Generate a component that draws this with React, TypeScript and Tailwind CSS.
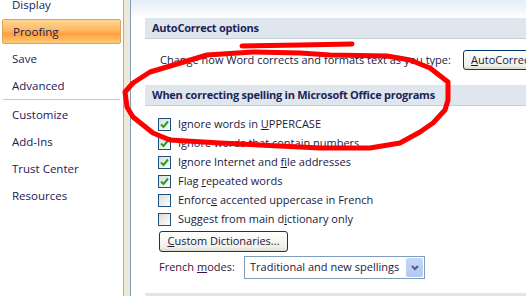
import React from "react";

const font = { fontFamily: '"Open Sans", "Noto Sans", "DejaVu Sans", sans-serif' };

function Check() {
  return (
    <svg width="9" height="9" viewBox="0 0 9 9">
      <path d="M1 4.5 L3.5 7 L8 1.5" fill="none" stroke="#21a121" strokeWidth="2" />
    </svg>
  );
}

function CheckRow({ checked, children }: { checked?: boolean; children: React.ReactNode }) {
  return (
    <div className="flex h-[19px] items-center pl-[13px]">
      <div className="flex h-[13px] w-[13px] shrink-0 items-center justify-center border border-[#1c5180] bg-[linear-gradient(135deg,#dcdcd7_0%,#ffffff_100%)]">
        {checked ? <Check /> : null}
      </div>
      <span className="ml-[7px] whitespace-nowrap text-[11px] text-[#1a1a3c]">{children}</span>
    </div>
  );
}

function Header({ children }: { children: React.ReactNode }) {
  return (
    <div className="flex h-[21px] items-center border-b border-[#c5cdd6] bg-[#dfe6ee] pl-[7px]">
      <span className="whitespace-nowrap text-[11px] font-bold tracking-[-0.25px] text-[#1b2456]">{children}</span>
    </div>
  );
}

const navItems = ["Display", "Proofing", "Save", "Advanced"];
const navItems2 = ["Customize", "Add-Ins", "Trust Center", "Resources"];

export default function App() {
  return (
    <div className="relative flex h-[296px] w-[526px] overflow-hidden bg-white" style={font}>
      <div className="mt-[-9px] w-[123px] shrink-0">
        {navItems.map((item) =>
          item === "Proofing" ? (
            <div key={item} className="h-[27px] px-[2px] py-[1px]">
              <div className="flex h-[25px] items-center rounded-[2px] border border-[#dba558] bg-[linear-gradient(180deg,#ffd796_0%,#ffb860_45%,#ff9f3c_60%,#ffcb78_100%)] pl-[10px] text-[11.5px] text-[#20195a]">
                {item}
              </div>
            </div>
          ) : (
            <div key={item} className="flex h-[27px] items-center pl-[12px] text-[11.5px] text-[#20195a]">
              {item}
            </div>
          ),
        )}
        <div className="mx-[3px] h-[2px] border-t border-[#c4c4c4]" />
        {navItems2.map((item) => (
          <div key={item} className="flex h-[27px] items-center pl-[12px] text-[11.5px] text-[#20195a]">
            {item}
          </div>
        ))}
      </div>

      <div className="w-[8px] shrink-0 border-l border-r border-l-[#9fb0c4] border-r-[#7f9db9] bg-[#ece9d8]" />

      <div className="flex-1 overflow-hidden bg-[linear-gradient(180deg,#e4edf8_0px,#ffffff_18px)] pl-[14px] pt-[18px]">
        <Header>AutoCorrect options</Header>
        <div className="mt-[11px] flex h-[20px] items-center">
          <span className="w-[318px] shrink-0 whitespace-nowrap pl-[15px] text-[11px] text-[#1a1a3c]">
            Change how Word corrects and formats text as you type:
          </span>
          <div className="flex h-[20px] w-[110px] shrink-0 items-center rounded-[3px] border border-[#003c74] bg-[linear-gradient(180deg,#ffffff_0%,#f1efe8_80%,#dedbd0_100%)] pl-[7px] text-[11px] text-[#1a1a3c] whitespace-nowrap">
            <span className="underline">A</span>utoCorrect Options...
          </div>
        </div>

        <div className="mt-[15px]">
          <Header>When correcting spelling in Microsoft Office programs</Header>
        </div>

        <div className="mt-[9px]">
          <CheckRow checked>
            Ignore words in <span className="underline">U</span>PPERCASE
          </CheckRow>
          <CheckRow checked>
            Ignore words that contain num<span className="underline">b</span>ers
          </CheckRow>
          <CheckRow checked>
            Ignore Internet and <span className="underline">f</span>ile addresses
          </CheckRow>
          <CheckRow checked>
            Flag <span className="underline">r</span>epeated words
          </CheckRow>
          <CheckRow>
            Enforc<span className="underline">e</span> accented uppercase in French
          </CheckRow>
          <CheckRow>
            Suggest from main d<span className="underline">i</span>ctionary only
          </CheckRow>
        </div>

        <div className="mt-[2px] pl-[14px]">
          <div className="flex h-[21px] w-[129px] items-center justify-center rounded-[3px] border border-[#003c74] bg-[linear-gradient(180deg,#ffffff_0%,#f1efe8_80%,#dedbd0_100%)] text-[11px] text-[#1a1a3c]">
            <span className="underline">C</span>ustom Dictionaries...
          </div>
        </div>

        <div className="mt-[4px] flex h-[23px] items-center pl-[14px]">
          <span className="w-[85px] shrink-0 whitespace-nowrap text-[11px] text-[#3a1240]">
            French <span className="underline">m</span>odes:
          </span>
          <div className="flex h-[23px] w-[181px] shrink-0 items-center justify-between border border-[#7f9db9] bg-white pl-[5px] pr-[1px]">
            <span className="whitespace-nowrap text-[11px] text-[#1a1a3c]">Traditional and new spellings</span>
            <div className="flex h-[19px] w-[17px] items-center justify-center rounded-[2px] bg-[linear-gradient(180deg,#c8d6f6_0%,#b4c8f2_100%)]">
              <svg width="8" height="6" viewBox="0 0 8 6">
                <path d="M1 1 L4 4 L7 1" fill="none" stroke="#4d6185" strokeWidth="2" />
              </svg>
            </div>
          </div>
        </div>

        <div className="mt-[14px] h-[21px] bg-[#dfe6ee]" />
      </div>

      <svg className="pointer-events-none absolute left-0 top-0" width="526" height="296" viewBox="0 0 526 296">
        <path
          d="M242 46 L300 45 L352 44"
          fill="none"
          stroke="#ff0000"
          strokeWidth="5"
          strokeLinecap="round"
          strokeLinejoin="round"
        />
        <path
          d="M127 107 L125 92 L133 83 L150 72 L177 64 L207 55 L253 52 L300 53 L330 55 L387 56 L410 60 L430 68 L448 82 L448 100 L445 110 L433 123 L420 132 L400 143 L370 148 L320 148 L220 143 L170 140 L153 133 L133 117 L127 107"
          fill="none"
          stroke="#ff0000"
          strokeWidth="5"
          strokeLinecap="round"
          strokeLinejoin="round"
        />
      </svg>
    </div>
  );
}
